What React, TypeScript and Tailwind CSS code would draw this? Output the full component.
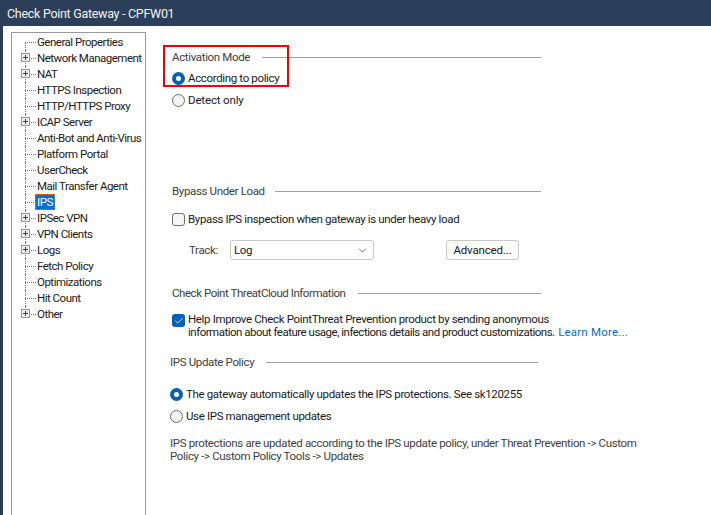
import { ChevronDown, Check } from "lucide-react";

const FONT = "font-['Roboto','Liberation_Sans',sans-serif]";

const TREE = [
  { label: "General Properties" },
  { label: "Network Management", plus: true },
  { label: "NAT", plus: true },
  { label: "HTTPS Inspection" },
  { label: "HTTP/HTTPS Proxy" },
  { label: "ICAP Server", plus: true },
  { label: "Anti-Bot and Anti-Virus" },
  { label: "Platform Portal" },
  { label: "UserCheck" },
  { label: "Mail Transfer Agent" },
  { label: "IPS", selected: true },
  { label: "IPSec VPN", plus: true },
  { label: "VPN Clients", plus: true },
  { label: "Logs", plus: true },
  { label: "Fetch Policy" },
  { label: "Optimizations" },
  { label: "Hit Count" },
  { label: "Other", plus: true },
];

function TreeRow({ label, plus, selected, last, first }: { label: string; plus?: boolean; selected?: boolean; last?: boolean; first?: boolean }) {
  return (
    <div className="flex h-4 items-center tracking-[-0.5px]">
      <div className="relative h-4 w-[11px] shrink-0">
        <div className={`absolute left-0 border-l border-dotted border-[#777] ${first ? "top-2 bottom-0" : last ? "top-0 h-2" : "top-0 bottom-0"}`} />
        <div className="absolute left-0 right-0 top-2 border-t border-dotted border-[#777]" />
        {plus && (
          <div className="absolute left-[-4px] top-[3px] flex h-[9px] w-[9px] items-center justify-center border border-[#949494] bg-[#eeeef3]">
            <svg width="7" height="7" viewBox="0 0 7 7">
              <path d="M1 3.5H6M3.5 1V6" stroke="#27408b" strokeWidth="1" />
            </svg>
          </div>
        )}
      </div>
      {selected ? (
        <span className="ml-[-1px] flex h-4 items-center border border-dotted border-[#d97a1a] bg-[#0b6fd1] px-[1px] text-white">{label}</span>
      ) : (
        <span className="ml-[1px] text-[#1a1a1a]">{label}</span>
      )}
    </div>
  );
}

function Heading({ title, lineWidth, className = "" }: { title: string; lineWidth: string; className?: string }) {
  return (
    <div className={`flex h-4 items-center text-[#404040] ${className}`}>
      <span>{title}</span>
      <div className={`ml-auto h-px bg-[#a0a0a0] ${lineWidth}`} />
    </div>
  );
}

function Radio({ on }: { on?: boolean }) {
  return on ? (
    <span className="flex h-[13px] w-[13px] shrink-0 items-center justify-center rounded-full bg-[#0560b8]">
      <span className="h-[5px] w-[5px] rounded-full bg-white" />
    </span>
  ) : (
    <span className="h-[13px] w-[13px] shrink-0 rounded-full border border-[#6e6e6e] bg-[#f3f3f3]" />
  );
}

export default function App() {
  return (
    <div className={`${FONT} flex h-[515px] w-[711px] flex-col overflow-hidden whitespace-nowrap bg-white text-[11.5px] leading-[13px] tracking-[-0.35px] text-[#1a1a1a]`}>
      <div className="flex h-[26px] shrink-0 items-center bg-[#2c3f5a] pl-[7px] text-[12.5px] tracking-[-0.29px] text-[#f2f2f2]">
        Check Point Gateway - CPFW01
      </div>
      <div className="flex min-h-0 flex-1">
        <div className="w-[3px] shrink-0 bg-[#2c3f5a]" />
        <div className="ml-2 mt-[6px] h-[500px] w-[135px] shrink-0 border border-[#9a9a9a] pl-[13px] pt-[1px]">
          {TREE.map((t, i) => (
            <TreeRow key={t.label} {...t} first={i === 0} last={i === TREE.length - 1} />
          ))}
        </div>
        <div className="relative flex-1">
          {/* red highlight from the source screenshot */}
          <div className="absolute left-[17px] top-[19px] h-[42px] w-[126px] border-2 border-[#f00000]" />
          <div className="ml-[26px] flex w-[369px] flex-col pt-[23px]">
            <Heading title="Activation Mode" lineWidth="w-[279px]" />
            <div className="mt-[3px] flex h-[20px] items-center gap-[3px]"><Radio on />According to policy</div>
            <div className="mt-[2px] flex h-[20px] items-center gap-[3px] tracking-[-0.15px]"><Radio />Detect only</div>
            <Heading title="Bypass Under Load" lineWidth="w-[266px]" className="mt-[73px]" />
            <div className="mt-[10px] flex h-[20px] items-center gap-[3px]">
              <span className="h-[13px] w-[13px] shrink-0 rounded-[3px] border border-[#6e6e6e] bg-[#f5f5f5]" />
              Bypass IPS inspection when gateway is under heavy load
            </div>
            <div className="mt-[11px] flex h-[20px] items-center">
              <span className="ml-[17px] w-[41px] text-[#404040]">Track:</span>
              <div className="flex h-[20px] w-[144px] items-center justify-between rounded-[3px] border border-[#c8c8c8] pl-[3px] pr-[4px]">
                Log
                <ChevronDown size={13} strokeWidth={1.3} className="text-[#444]" />
              </div>
              <div className="ml-[72px] flex h-[20px] w-[73px] items-center justify-center rounded-[3px] border border-[#c8c8c8] bg-[#fbfbfb] tracking-[-0.15px]">Advanced...</div>
            </div>
            <Heading title="Check Point ThreatCloud Information" lineWidth="w-[183px]" className="mt-[25px] tracking-[-0.45px]" />
            <div className="mt-[12px] flex gap-[3px]">
              <span className="mt-[1px] flex h-[13px] w-[13px] shrink-0 items-center justify-center rounded-[3px] bg-[#0560b8]">
                <Check size={10} strokeWidth={2} className="text-white" />
              </span>
              <div className="w-[460px] shrink-0">
                Help Improve Check PointThreat Prevention product by sending anonymous
                <br />
                <span className="tracking-[-0.5px]">information about feature usage, infections details and product customizations.</span>{" "}
                <span className="ml-px tracking-[0.2px] text-[#0a6cc8]">Learn More...</span>
              </div>
            </div>
          </div>
          <div className="ml-[24px] flex w-[480px] flex-col pt-[15px]">
            <div className="flex w-[368px] flex-col">
              <Heading title="IPS Update Policy" lineWidth="w-[272px]" />
            </div>
            <div className="mt-[14px] flex h-[20px] items-center gap-[3px]"><Radio on />The gateway automatically updates the IPS protections. See sk120255</div>
            <div className="mt-[2px] flex h-[20px] items-center gap-[3px]"><Radio />Use IPS management updates</div>
            <p className="mt-[11px] text-[#404040]">
              IPS protections are updated according to the IPS update policy, under Threat Prevention -&gt; Custom
              <br />
              Policy -&gt; Custom Policy Tools -&gt; Updates
            </p>
          </div>
        </div>
      </div>
    </div>
  );
}
